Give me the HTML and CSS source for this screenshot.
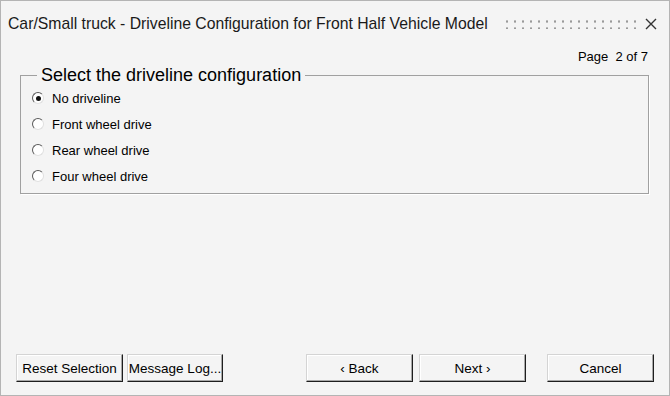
FILE: index.html
```html
<!DOCTYPE html>
<html lang="en">
<head>
    <meta charset="UTF-8">
    <meta name="viewport" content="width=device-width, initial-scale=1.0">
    <title>Driveline Configuration</title>
    <link rel="stylesheet" href="styles.css">
</head>
<body>
    <div class="window">
        <!-- Title bar -->
        <div class="titlebar">
            <span class="title">Car/Small truck - Driveline Configuration for Front Half Vehicle Model</span>
            <span class="grip"></span>
            <svg class="close" width="12" height="12" viewBox="0 0 12 12">
                <path d="M1 1 L11 11 M11 1 L1 11" stroke="#333" stroke-width="1.4" fill="none"/>
            </svg>
        </div>

        <div class="page-row">Page&nbsp; 2 of 7</div>

        <!-- Driveline options -->
        <fieldset class="group">
            <legend>Select the driveline configuration</legend>
            <label class="option"><span class="radio checked"></span>No driveline</label>
            <label class="option"><span class="radio"></span>Front wheel drive</label>
            <label class="option"><span class="radio"></span>Rear wheel drive</label>
            <label class="option"><span class="radio"></span>Four wheel drive</label>
        </fieldset>

        <!-- Footer buttons -->
        <div class="footer">
            <button class="btn btn-reset">Reset Selection</button>
            <button class="btn btn-log">Message Log...</button>
            <button class="btn btn-back">&lsaquo; Back</button>
            <button class="btn btn-next">Next &rsaquo;</button>
            <button class="btn btn-cancel">Cancel</button>
        </div>
    </div>
</body>
</html>
```

FILE: styles.css
```css
body {
    margin: 0;
    padding: 0;
    font-family: "Liberation Sans", Arial, sans-serif;
    color: #000;
    background-color: #f4f4f4;
}

.window {
    box-sizing: border-box;
    width: 670px;
    height: 396px;
    border: 1px solid #b4b4b4;
    background-color: #f4f4f4;
    display: flex;
    flex-direction: column;
}

.titlebar {
    height: 45px;
    display: flex;
    align-items: center;
    padding: 0 0 0 7px;
}

.title {
    font-size: 15.75px;
    color: #1a1a1a;
    white-space: nowrap;
}

.grip {
    width: 132px;
    height: 10px;
    margin-left: 18px;
    background-image: radial-gradient(circle, #9a9a9a 1px, transparent 1.3px);
    background-size: 8px 7px;
    background-position: -3px -1px;
}

.close {
    margin-left: 7px;
}

.page-row {
    text-align: right;
    font-size: 13px;
    padding-right: 21px;
    height: 20px;
    line-height: 20px;
    margin-top: 1px;
}

.group {
    margin: 0 20px 0 19px;
    padding: 0 0 4px 0;
    border: 1px solid #a0a0a0;
    box-shadow: 1px 1px 0 #fff;
}

.group legend {
    margin-left: 16px;
    padding: 0 4px;
    font-size: 18px;
    line-height: 16px;
}

.option {
    display: flex;
    align-items: center;
    height: 26px;
    padding-left: 11px;
    font-size: 13px;
}

.option:first-of-type {
    margin-top: 2px;
}

.radio {
    box-sizing: border-box;
    width: 12px;
    height: 12px;
    border-radius: 50%;
    border: 1px solid;
    border-color: #5a5a5a #e0e0e0 #e0e0e0 #5a5a5a;
    background: #fff;
    margin-right: 8px;
    position: relative;
}

.radio.checked::after {
    content: "";
    position: absolute;
    left: 2.5px;
    top: 2.5px;
    width: 5px;
    height: 5px;
    border-radius: 50%;
    background: #111;
}

.footer {
    margin-top: auto;
    display: flex;
    padding: 0 15px 13px 15px;
}

.btn {
    box-sizing: border-box;
    height: 28px;
    font-family: "Liberation Sans", Arial, sans-serif;
    font-size: 13.5px;
    color: #000;
    background-color: #f4f4f4;
    border: 1px solid;
    border-color: #d4d4d4 #1e1e1e #1e1e1e #d4d4d4;
    box-shadow: inset -1px -1px 0 #a8a8a8, inset 1px 1px 0 #fff;
    padding: 0;
}

.btn-reset { width: 107px; }
.btn-log { width: 96px; margin-left: 4px; }
.btn-back { width: 107px; margin-left: auto; }
.btn-next { width: 107px; margin-left: 6px; }
.btn-cancel { width: 107px; margin-left: 21px; }
```
